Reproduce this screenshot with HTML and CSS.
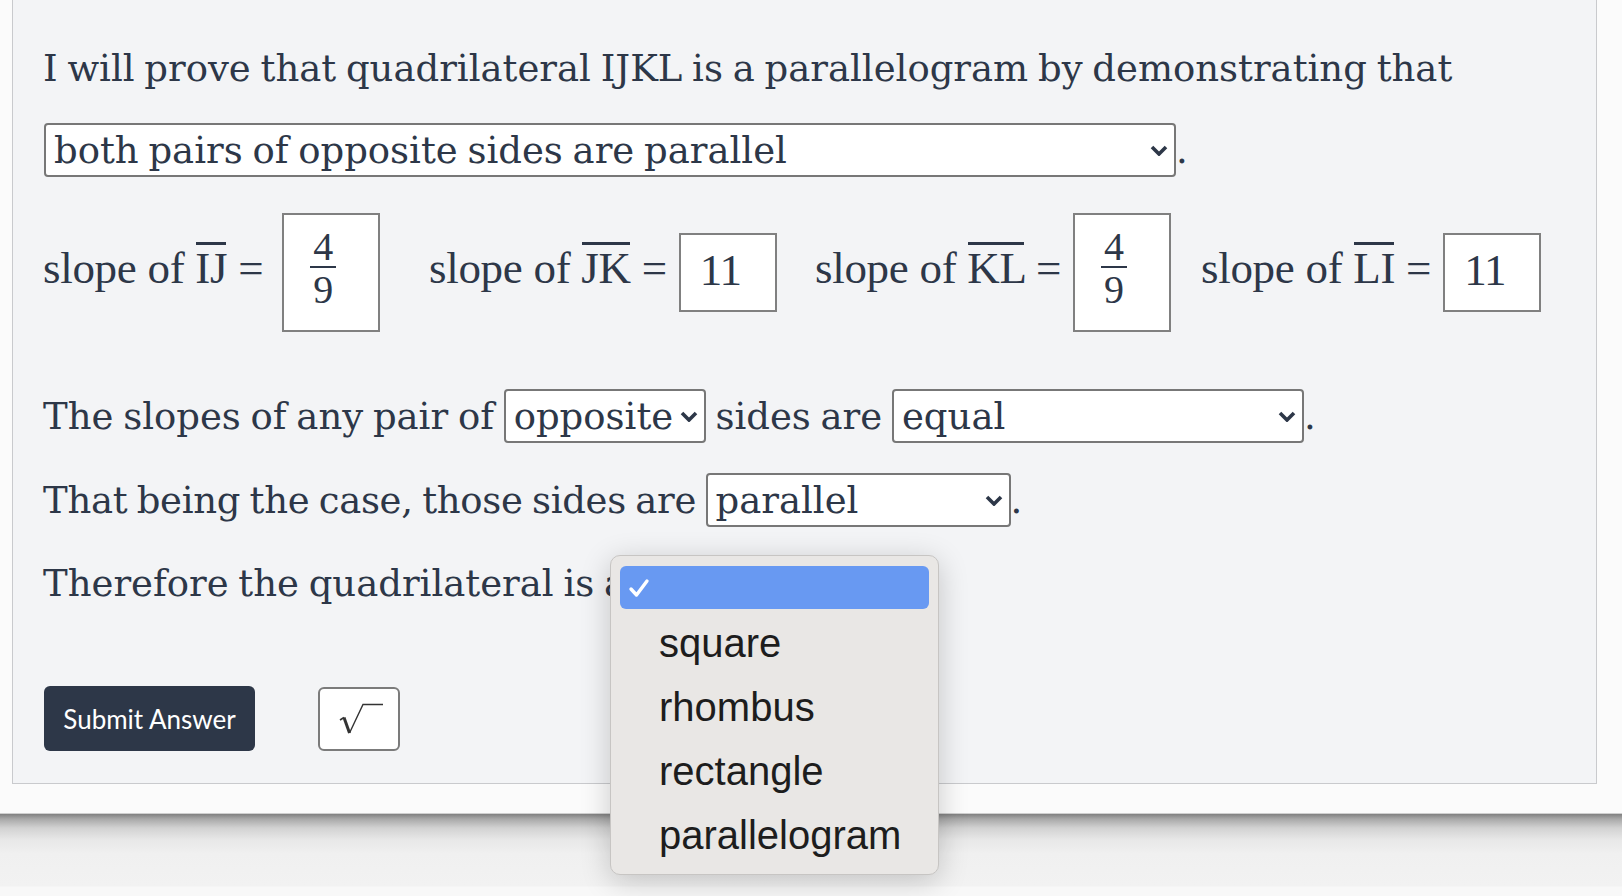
FILE: index.html
```html
<!DOCTYPE html>
<html lang="en">
<head>
<meta charset="utf-8">
<title>Parallelogram proof</title>
<link rel="stylesheet" href="styles.css">
</head>
<body>
<div class="screen">
  <div class="window">
    <div class="panel">
      <p class="line l1">I will prove that quadrilateral IJKL is a parallelogram by demonstrating that</p>
      <div class="line l2"><span class="sel w-main"><span class="val">both pairs of opposite sides are parallel</span><svg class="chev" width="18" height="11" viewBox="0 0 18 11"><polyline points="2,2 9,9 16,2" fill="none" stroke="#2d3748" stroke-width="3.6"/></svg></span>.</div>
      <div class="slopes">
        <div class="grp first"><span class="mlabel">slope of <span class="ov">IJ</span> =</span><span class="mbox tall"><span class="frac"><span class="num">4</span><span class="den">9</span></span></span></div>
        <div class="grp"><span class="mlabel">slope of <span class="ov">JK</span> =</span><span class="mbox">11</span></div>
        <div class="grp"><span class="mlabel">slope of <span class="ov">KL</span> =</span><span class="mbox tall"><span class="frac"><span class="num">4</span><span class="den">9</span></span></span></div>
        <div class="grp"><span class="mlabel">slope of <span class="ov">LI</span> =</span><span class="mbox">11</span></div>
      </div>
      <div class="line l3">The slopes of any pair of <span class="sel w-opp"><span class="val">opposite</span><svg class="chev" width="18" height="11" viewBox="0 0 18 11"><polyline points="2,2 9,9 16,2" fill="none" stroke="#2d3748" stroke-width="3.6"/></svg></span> sides are <span class="sel w-eq"><span class="val">equal</span><svg class="chev" width="18" height="11" viewBox="0 0 18 11"><polyline points="2,2 9,9 16,2" fill="none" stroke="#2d3748" stroke-width="3.6"/></svg></span>.</div>
      <div class="line l4">That being the case, those sides are <span class="sel w-par"><span class="val">parallel</span><svg class="chev" width="18" height="11" viewBox="0 0 18 11"><polyline points="2,2 9,9 16,2" fill="none" stroke="#2d3748" stroke-width="3.6"/></svg></span>.</div>
      <div class="line l5">Therefore the quadrilateral is a <span class="sel w-quad"><span class="val"></span></span></div>
      <div class="actions">
        <button class="submit">Submit Answer</button>
        <button class="sqrt" aria-label="math"><svg width="78" height="60" viewBox="0 0 78 60"><path d="M20 31 L24 28.5" fill="none" stroke="#333" stroke-width="1.6"/><path d="M24 28.5 L29.5 44" fill="none" stroke="#333" stroke-width="3"/><path d="M29.5 44 L43 15.5 L63 15.5" fill="none" stroke="#333" stroke-width="1.4"/></svg></button>
      </div>
    </div>
  </div>
  <div class="desk"></div>

  <div class="popup">
    <div class="opt current"><svg class="check" width="22" height="20" viewBox="0 0 22 20"><polyline points="3,11 8.5,17 19,3" fill="none" stroke="#fff" stroke-width="3.4" stroke-linecap="round" stroke-linejoin="round"/></svg></div>
    <div class="opt">square</div>
    <div class="opt">rhombus</div>
    <div class="opt">rectangle</div>
    <div class="opt">parallelogram</div>
  </div>
</div>
</body>
</html>
```
FILE: styles.css
```css
html, body {
  margin: 0;
  padding: 0;
}
body {
  width: 1622px;
  height: 896px;
  overflow: hidden;
  background: #f1f1f1;
}
.screen {
  position: relative;
  width: 1622px;
  height: 896px;
}
.window {
  height: 814px;
  box-sizing: border-box;
  background: #fbfbfb;
  border-bottom: 1px solid #cfcfcf;
  padding: 0 25px 0 12px;
}
.panel {
  height: 784px;
  box-sizing: border-box;
  background: #f3f4f6;
  border: 1px solid #c9cacd;
  border-top: none;
  padding-left: 30px;
  display: flex;
  flex-direction: column;
  color: #2d3748;
  font-family: "DejaVu Serif", Georgia, serif;
  font-size: 37px;
  word-spacing: -2px;
}
.line {
  margin: 0;
  height: 54px;
  line-height: 54px;
  white-space: nowrap;
}
.l1 { margin-top: 42px; }
.l2 { margin-top: 27px; }
.l3 { margin-top: 57px; }
.l4 { margin-top: 30px; letter-spacing: -0.3px; }
.l4 .sel { letter-spacing: 0; }
.l5 { margin-top: 30px; }

.sel {
  display: inline-flex;
  align-items: center;
  justify-content: space-between;
  box-sizing: border-box;
  height: 54px;
  border: 2px solid #777;
  border-radius: 4px;
  background: #fff;
  padding: 0 6px 0 8px;
  vertical-align: baseline;
  word-spacing: -2px;
}
.sel .val { line-height: normal; }
.chev { flex: none; }
.w-main { width: 1132px; margin-left: 1px; }
.w-opp { width: 202px; }
.w-eq { width: 412px; }
.w-par { width: 305px; }
.w-quad { width: 300px; }

.slopes {
  margin-top: 36px;
  height: 119px;
  display: grid;
  grid-template-columns: repeat(4, 386px);
  font-family: "Liberation Serif", "Times New Roman", serif;
  word-spacing: 0;
}
.grp {
  display: flex;
  align-items: center;
  gap: 12px;
}
.grp.first { gap: 19px; }
.mlabel {
  font-size: 45px;
  letter-spacing: -0.3px;
  white-space: nowrap;
  padding-bottom: 10px;
}
.ov {
  position: relative;
}
.ov::before {
  content: "";
  position: absolute;
  left: 1px;
  right: 1px;
  top: -1px;
  height: 3px;
  background: #2d3748;
}
.mbox {
  box-sizing: border-box;
  width: 98px;
  height: 79px;
  background: #fff;
  border: 2px solid #808080;
  display: flex;
  align-items: center;
  padding: 0 0 5px 19px;
  font-size: 45px;
  letter-spacing: -1px;
  line-height: normal;
}
.mbox.tall {
  height: 119px;
  padding: 0 0 8px 26px;
  letter-spacing: 0;
}
.frac {
  display: inline-flex;
  flex-direction: column;
  align-items: stretch;
  width: 26px;
  text-align: center;
  font-size: 40px;
}
.num {
  line-height: 30px;
  padding-bottom: 4px;
  border-bottom: 2px solid #2d3748;
}
.den {
  line-height: 30px;
  padding-top: 7px;
}

.actions {
  margin-top: 75px;
  display: flex;
  align-items: flex-start;
  gap: 63px;
}
.submit {
  margin-left: 1px;
  width: 211px;
  height: 65px;
  border: none;
  border-radius: 6px;
  background: #2d3748;
  color: #fff;
  font-family: Lato, "Open Sans", sans-serif;
  font-size: 26px;
  word-spacing: 0;
  padding: 0;
}
.sqrt {
  box-sizing: border-box;
  width: 82px;
  height: 64px;
  margin-top: 1px;
  background: #fff;
  border: 2px solid #7b7b7b;
  border-radius: 6px;
  padding: 0;
  display: flex;
  align-items: center;
  justify-content: center;
}
.sqrt svg { display: block; }

.desk {
  height: 82px;
  background: linear-gradient(#808080 0px, #a9a9a9 5px, #d2d2d2 14px, #e8e8e8 26px, #f0f0f0 40px, #f2f2f2 72px, #f8f8f8 73px, #f8f8f8 82px);
}

.popup {
  position: absolute;
  left: 610px;
  top: 555px;
  width: 329px;
  height: 320px;
  box-sizing: border-box;
  background: #e9e7e5;
  border: 1px solid #c7c5c3;
  border-radius: 10px;
  padding: 10px 9px 0 9px;
  box-shadow: 0 6px 30px rgba(0, 0, 0, 0.2);
  font-family: "Liberation Sans", Arial, sans-serif;
  font-size: 40px;
  color: #1d1d1d;
}
.opt {
  height: 64px;
  line-height: 64px;
  padding-left: 39px;
}
.opt.current {
  height: 43px;
  margin-bottom: 2px;
  background: #6899f2;
  border-radius: 6px;
  position: relative;
}
.check {
  position: absolute;
  left: 8px;
  top: 12px;
}
```
